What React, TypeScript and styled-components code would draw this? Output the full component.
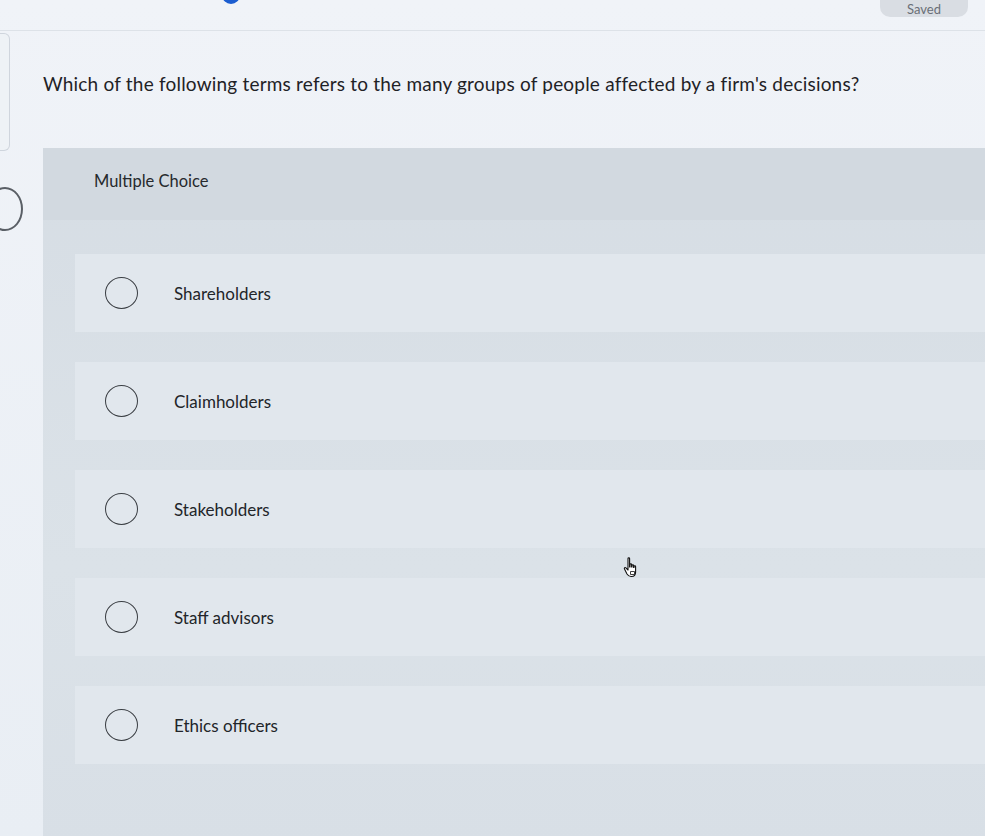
import React from 'react';
import styled, { createGlobalStyle } from 'styled-components';

const GlobalStyle = createGlobalStyle`
  html, body {
    margin: 0;
    padding: 0;
    background: #eef2f7;
    font-family: Lato, "Open Sans", "Liberation Sans", sans-serif;
    color: #222;
  }
  #root {
    min-height: 836px;
  }
`;

const Page = styled.div`
  position: relative;
  width: 985px;
  height: 836px;
  overflow: hidden;
  background: linear-gradient(180deg, #f0f3f8 0%, #e9eef4 100%);
`;

const Header = styled.header`
  display: flex;
  align-items: flex-start;
  justify-content: space-between;
  height: 30px;
  border-bottom: 1px solid #dde2e8;
  padding: 0 17px 0 222px;
`;

const ProgressDot = styled.span`
  display: block;
  width: 18px;
  height: 18px;
  margin-top: -14px;
  border-radius: 50%;
  background: #1b5dd0;
`;

const SavedButton = styled.button`
  width: 88px;
  height: 28px;
  margin-top: -11px;
  border: none;
  border-radius: 10px;
  background: #d9dde3;
  color: #6a6f77;
  font-family: inherit;
  font-size: 13px;
  line-height: 14px;
  padding: 11px 0 0;
`;

const Body = styled.div`
  display: grid;
  grid-template-columns: 43px 1fr;
`;

const Rail = styled.aside`
  display: flex;
  flex-direction: column;
`;

const Stub = styled.div`
  width: 9px;
  height: 116px;
  margin-top: 2px;
  border: 1px solid #cfd5dd;
  border-left: none;
  border-radius: 0 6px 6px 0;
  background: #eef2f6;
`;

const NavCircle = styled.div`
  width: 32px;
  height: 40px;
  margin: 36px 0 0 -13px;
  border: 2px solid #5a5f66;
  border-radius: 50%;
`;

const Content = styled.main`
  display: flex;
  flex-direction: column;
`;

const Question = styled.h1`
  margin: 40px 0 0;
  font-size: 19px;
  font-weight: 400;
  line-height: 26px;
  color: #1f2226;
  letter-spacing: 0.2px;
  white-space: nowrap;
`;

const Panel = styled.section`
  margin-top: 51px;
  background: linear-gradient(180deg, #d6dde4 0%, #dbe2e8 60%, #d8dfe6 100%);
  padding-bottom: 80px;
  display: flex;
  flex-direction: column;
  gap: 30px;
`;

const PanelHeader = styled.div`
  height: 72px;
  padding: 23px 0 0 51px;
  box-sizing: border-box;
  background: #d2d9e0;
  font-size: 16.5px;
  color: #26292d;
  margin-bottom: 4px;
`;

const Option = styled.label`
  display: flex;
  align-items: center;
  gap: 36px;
  height: 78px;
  margin-left: 32px;
  padding-left: 30px;
  background: #e1e7ed;
  cursor: pointer;
`;

const Radio = styled.span`
  flex: none;
  width: 33px;
  height: 32px;
  border: 1.6px solid #3a3e43;
  border-radius: 50%;
  box-sizing: border-box;
`;

const OptionText = styled.span`
  font-size: 17px;
  color: #222529;
`;

const Cursor = styled.svg`
  position: absolute;
  left: 622px;
  top: 556px;
  width: 20px;
  height: 24px;
`;

const options = ['Shareholders', 'Claimholders', 'Stakeholders', 'Staff advisors', 'Ethics officers'];

export default function App() {
  return (
    <>
      <GlobalStyle />
      <Page>
        <Header>
          <ProgressDot />
          <SavedButton>Saved</SavedButton>
        </Header>
        <Body>
          <Rail>
            <Stub />
            <NavCircle />
          </Rail>
          <Content>
            <Question>
              Which of the following terms refers to the many groups of people affected by a firm's decisions?
            </Question>
            <Panel>
              <PanelHeader>Multiple Choice</PanelHeader>
              {options.map((o) => (
                <Option key={o}>
                  <Radio />
                  <OptionText>{o}</OptionText>
                </Option>
              ))}
            </Panel>
          </Content>
        </Body>
        <Cursor viewBox="0 0 20 24">
          <path
            d="M6 2.5c0-1 1.6-1 1.6 0V11h.4V8.5c0-1 1.6-1 1.6 0V11h.4V9.5c0-1 1.6-1 1.6 0V11.5h.4v-1c0-1 1.6-1 1.6 0v5.5c0 2.5-1.5 4.5-4 4.5H9c-2 0-3-1-4-2.5L2.5 13c-.6-1 .6-2 1.4-1.2L6 14V2.5z"
            fill="#fff"
            stroke="#111"
            strokeWidth="1.1"
            strokeLinejoin="round"
          />
          <path d="M8.5 15.5h4v3h-4z" fill="none" stroke="#111" strokeWidth="0.8" />
        </Cursor>
      </Page>
    </>
  );
}
